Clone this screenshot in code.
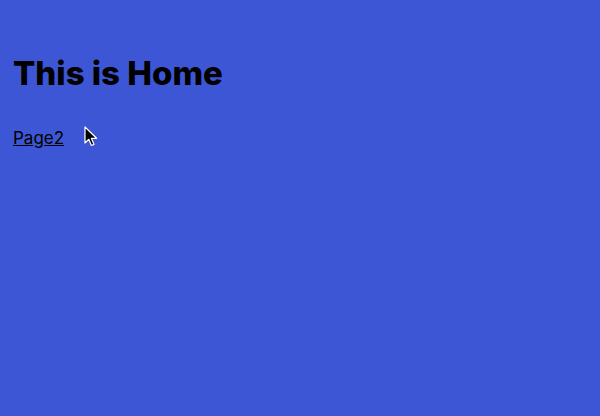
export default function App() {
  return (
    <div className="relative min-h-[416px] w-full bg-[#3c56d5] px-[13px] pt-[1px] font-['Inter',sans-serif] text-black">
      <h1 className="mt-[52px] text-[33px] font-extrabold leading-[40px] tracking-[0px]">This is Home</h1>
      <div className="mt-[33px]">
        <a href="#" className="text-[17px] leading-[24px] underline">
          Page2
        </a>
      </div>
      {/* mouse pointer captured in the screenshot */}
      <svg className="absolute left-[84px] top-[126px]" width="14" height="22" viewBox="0 0 14 22">
        <path d="M1 1 L1 17 L4.8 13.3 L7.4 19.5 L10 18.4 L7.4 12.3 L12.6 12.3 Z" fill="black" stroke="white" strokeWidth="1.2" strokeLinejoin="round" />
      </svg>
    </div>
  )
}
